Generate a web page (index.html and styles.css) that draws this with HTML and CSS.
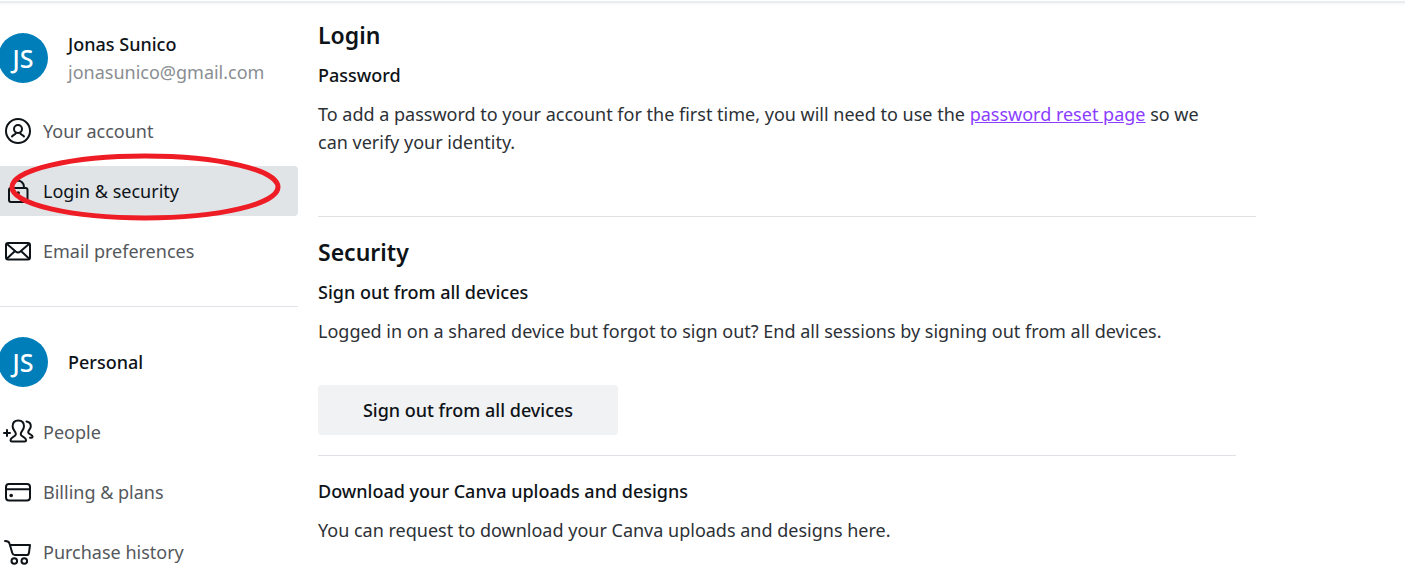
FILE: index.html
```html
<!DOCTYPE html>
<html lang="en">
<head>
<meta charset="UTF-8">
<meta name="viewport" content="width=device-width, initial-scale=1.0">
<title>Login &amp; security</title>
<link rel="stylesheet" href="styles.css">
</head>
<body>

<header class="topbar"></header>

<div class="page">

<!-- Sidebar -->
<aside class="sidebar">
    <div class="profile">
        <span class="avatar">JS</span>
        <div>
            <div class="name">Jonas Sunico</div>
            <div class="email">jonasunico@gmail.com</div>
        </div>
    </div>

    <nav class="menu">
        <a href="#account">
            <svg class="icon" viewBox="0 0 30 30">
                <circle cx="15" cy="15" r="12"/>
                <circle cx="15" cy="13" r="4"/>
                <path d="M9 20.5c.8-1.8 3.6-1.8 4-3.8M21 20.5c-.8-1.8-3.6-1.8-4-3.8"/>
            </svg>
            Your account
        </a>
        <a href="#login" class="active">
            <svg class="icon" viewBox="0 0 30 30">
                <rect x="6" y="12" width="18.500" height="14" rx="2"/>
                <path d="M9.500 12v-1.500a5.700 5.700 0 0 1 11.400 0V12"/>
                <circle class="dot" cx="15.200" cy="17" r="1.800"/>
            </svg>
            Login &amp; security
            <svg class="marker" viewBox="0 0 272 68">
                <ellipse cx="136" cy="34" rx="133" ry="31"/>
            </svg>
        </a>
        <a href="#email">
            <svg class="icon" viewBox="0 0 30 30">
                <rect x="3" y="7" width="24" height="16.500" rx="2"/>
                <path d="M4 8l8.700 7.500c1.500 1.200 3.100 1.200 4.600 0L26 8M4 22.500l7.500-7M26 22.500l-7.500-7"/>
            </svg>
            Email preferences
        </a>
    </nav>

    <hr>

    <div class="profile">
        <span class="avatar">JS</span>
        <div class="name">Personal</div>
    </div>

    <nav class="menu">
        <a href="#people">
            <svg class="icon" viewBox="0 0 30 30">
                <path d="M1 16h6M4 13v6"/>
                <path d="M15.300 3.500c-3.700 0-5.700 2.300-5.700 5.800 0 3.700 3.300 5 3.300 7.700 0 3.200-5.400 2.700-5.400 6.200 0 .8.600 1.300 1.500 1.300h12.600c.9 0 1.500-.5 1.500-1.300 0-3.500-5.400-3-5.400-6.200 0-2.700 3.300-4 3.300-7.700 0-3.500-2-5.800-5.700-5.800z"/>
                <path d="M23.500 4.500c2.800.4 4.300 2.200 4.300 4.700 0 3-2.600 3.800-2.600 6.100 0 2.500 4.400 1.800 4.400 4.400 0 .7-.5 1.100-1.300 1.100h-1.300"/>
            </svg>
            People
        </a>
        <a href="#billing">
            <svg class="icon" viewBox="0 0 30 30">
                <rect x="3" y="7" width="24" height="16.500" rx="3"/>
                <path d="M3 12.200h24"/>
                <circle class="dot" cx="8.200" cy="18.500" r="1.800"/>
            </svg>
            Billing &amp; plans
        </a>
        <a href="#purchases">
            <svg class="icon" viewBox="0 0 30 30">
                <path d="M2 4c2.800 0 4 .600 4.500 2.500l2.800 9.500c.4 1.300 1 2 2.400 2H25M7 8h20l-1 7.500c-.2 1.500-.7 2.500-2 2.500"/>
                <circle cx="11.300" cy="24" r="2.800"/>
                <circle cx="21.300" cy="24" r="2.800"/>
            </svg>
            Purchase history
        </a>
    </nav>
</aside>

<!-- Settings -->
<main class="content">
    <section class="login">
        <h2>Login</h2>
        <h3>Password</h3>
        <p>To add a password to your account for the first time, you will need to use the <a href="#reset">password reset page</a> so we can verify your identity.</p>
    </section>

    <section class="security">
        <h2>Security</h2>
        <h3>Sign out from all devices</h3>
        <p>Logged in on a shared device but forgot to sign out? End all sessions by signing out from all devices.</p>
        <button type="button">Sign out from all devices</button>
        <hr>
        <h3>Download your Canva uploads and designs</h3>
        <p>You can request to download your Canva uploads and designs here.</p>
    </section>
</main>

</div>

</body>
</html>
```
FILE: styles.css
```css
* {
    box-sizing: border-box;
}

body {
    margin: 0;
    background-color: white;
    color: #0e1318;
    font-family: "Noto Sans", sans-serif;
    font-size: 18px;
    line-height: 28px;
}

.topbar {
    height: 3px;
    border-bottom: 2px solid #e9edf0;
    box-shadow: 0 1px 3px #f0f2f4;
}

.page {
    display: flex;
    gap: 20px;
}

hr {
    height: 1px;
    margin: 0;
    border: none;
    background-color: #dfe3e7;
}

/* Sidebar */
.sidebar {
    width: 298px;
    flex-shrink: 0;
    padding-top: 27px;
}

.profile {
    display: flex;
    align-items: center;
    gap: 20px;
    margin-left: -2px;
    padding-bottom: 20px;
}

.avatar {
    width: 50px;
    height: 50px;
    border-radius: 50%;
    background-color: #007eb9;
    color: white;
    font-size: 25px;
    font-weight: 500;
    line-height: 50px;
    text-align: center;
}

.name {
    font-weight: 500;
}

.email {
    color: #8a8e92;
}

.menu {
    display: flex;
    flex-direction: column;
    gap: 10px;
}

.menu a {
    position: relative;
    display: flex;
    align-items: center;
    gap: 10px;
    height: 50px;
    padding-left: 3px;
    border-radius: 0 4px 4px 0;
    color: #54585c;
    text-decoration: none;
}

.menu .active {
    background-color: #e0e4e7;
    color: #0e1318;
}

.icon {
    width: 30px;
    height: 30px;
    overflow: visible;
    fill: none;
    stroke: #0e1318;
    stroke-width: 2;
    stroke-linecap: round;
    stroke-linejoin: round;
}

.icon .dot {
    fill: #0e1318;
    stroke: none;
}

/* Red ring drawn over the active item */
.marker {
    position: absolute;
    top: -13px;
    left: 9px;
    width: 272px;
    height: 68px;
    fill: none;
    stroke: #ee1c24;
    stroke-width: 5;
}

.sidebar hr {
    margin: 30px 0;
}

/* Content */
.content {
    flex: 1;
    max-width: 938px;
    padding-top: 16px;
}

h2, h3, p {
    margin: 0;
}

h2 {
    margin-bottom: 10px;
    font-size: 23px;
    font-weight: 600;
    line-height: 32px;
}

h3 {
    margin-bottom: 11px;
    font-size: 18px;
    font-weight: 500;
}

p {
    max-width: 890px;
    color: #2c3136;
}

p a {
    color: #8b3dff;
}

.login {
    padding-bottom: 60px;
    border-bottom: 1px solid #e1e1e3;
}

.security {
    padding: 19px 20px 20px 0;
}

.security button {
    width: 300px;
    height: 50px;
    margin: 40px 0 20px;
    border: none;
    border-radius: 4px;
    background-color: #f1f2f4;
    color: #0e1318;
    font-family: inherit;
    font-size: 18px;
    font-weight: 500;
    cursor: pointer;
}

.security button:hover {
    background-color: #e0e4e7;
}

.security hr {
    margin-bottom: 21px;
}
```
